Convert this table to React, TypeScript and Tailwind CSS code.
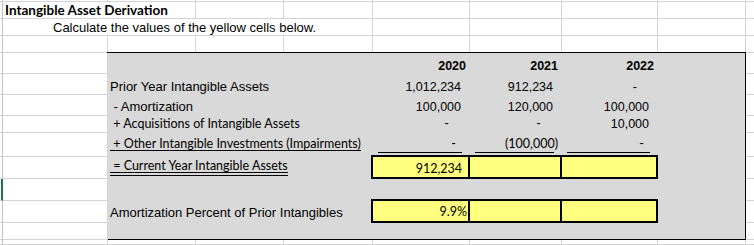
import React from "react";

const line = "border-b border-r border-[#d4d4d4]";
const arial = "font-['Liberation_Sans',Arial,sans-serif]";
const calibri = "font-['Lato',sans-serif]";

function Blank() {
  return <div className={line} />;
}

function Edge({ active = false }: { active?: boolean }) {
  return active ? (
    <div className="border-b border-r-2 border-b-[#d4d4d4] border-r-[#217346]" />
  ) : (
    <div className="border-b border-r border-b-[#d4d4d4] border-r-[#c2c2c2]" />
  );
}

function Tail() {
  return <div className="border-b border-[#d4d4d4]" />;
}

function Blanks({ n }: { n: number }) {
  return (
    <>
      {Array.from({ length: n }, (_, i) => (
        <Blank key={i} />
      ))}
    </>
  );
}

// one value cell inside the grey block, bottom aligned like Excel
function Val({ children, pr, pb, bold = false, font = arial, size = "text-[12.5px]" }: {
  children?: React.ReactNode;
  pr: string;
  pb: string;
  bold?: boolean;
  font?: string;
  size?: string;
}) {
  return (
    <div className={`flex items-end justify-end leading-none whitespace-nowrap text-black ${font} ${size} ${pr} ${pb} ${bold ? "font-bold" : ""}`}>
      {children}
    </div>
  );
}

function Underlined({ children, pr }: { children: React.ReactNode; pr: string }) {
  return (
    <div className={`flex flex-col justify-end pb-[4px] leading-none whitespace-nowrap text-[12.5px] text-black ${calibri}`}>
      <div className={`text-right ${pr}`}>{children}</div>
      <div className="mt-[2px] ml-[5px] mr-[8px] h-px bg-black" />
    </div>
  );
}

function Yellow({ children, pr = "pr-[6px]", pb }: { children?: React.ReactNode; pr?: string; pb: string }) {
  return (
    <div className={`-ml-[2px] -mt-[2px] flex items-end justify-end border-2 border-black bg-[#ffff80] leading-none text-[12.5px] text-black ${calibri} ${pr} ${pb}`}>
      {children}
    </div>
  );
}

function Block() {
  return (
    <div className="col-start-3 col-span-7 row-start-5 row-span-9 -ml-px -mt-px grid grid-cols-[265px_97px_92px_96px_1fr] grid-rows-[21px_21px_21px_17px_24px_22px_22px_22px_1fr] border border-black bg-[#d9d9d9]">
      {/* header */}
      <div />
      <Val pr="pr-[4px]" pb="pb-[2px]" bold>2020</Val>
      <Val pr="pr-[4px]" pb="pb-[2px]" bold>2021</Val>
      <Val pr="pr-[4px]" pb="pb-[2px]" bold>2022</Val>
      <div />

      {/* prior year */}
      <div className={`flex items-end pl-[2px] pb-[2px] leading-none text-[13px] text-black ${arial}`}>Prior Year Intangible Assets</div>
      <Val pr="pr-[9px]" pb="pb-[2px]">1,012,234</Val>
      <Val pr="pr-[9px]" pb="pb-[2px]">912,234</Val>
      <Val pr="pr-[21px]" pb="pb-[2px]">-</Val>
      <div />

      {/* amortization */}
      <div className={`flex items-end pl-[2px] pb-[3px] leading-none whitespace-pre text-[13px] text-black ${arial}`}> - Amortization</div>
      <Val pr="pr-[9px]" pb="pb-[3px]">100,000</Val>
      <Val pr="pr-[9px]" pb="pb-[3px]">120,000</Val>
      <Val pr="pr-[9px]" pb="pb-[3px]">100,000</Val>
      <div />

      {/* acquisitions */}
      <div className={`flex items-end pl-[2px] pb-[3px] leading-none whitespace-pre text-[12.5px] text-black ${calibri}`}> + Acquisitions of Intangible Assets</div>
      <Val pr="pr-[21px]" pb="pb-[3px]" font={calibri}>-</Val>
      <Val pr="pr-[21px]" pb="pb-[3px]" font={calibri}>-</Val>
      <Val pr="pr-[9px]" pb="pb-[3px]">10,000</Val>
      <div />

      {/* other investments */}
      <div className={`flex items-end pl-[2px] pb-[6px] leading-none text-[12.5px] text-black ${calibri}`}>
        <span className="inline-block whitespace-pre border-b border-black"> + Other Intangible Investments (Impairments)</span>
      </div>
      <Underlined pr="pr-[14px]">-</Underlined>
      <Underlined pr="pr-[4px]">(100,000)</Underlined>
      <Underlined pr="pr-[14px]">-</Underlined>
      <div />

      {/* current year */}
      <div className={`flex items-end pl-[2px] pb-[3px] leading-none text-[12.5px] text-black ${calibri}`}>
        <span className="inline-block border-b border-black pb-[2px]">
          <span className="inline-block whitespace-pre border-b border-black"> = Current Year Intangible Assets</span>
        </span>
      </div>
      <Yellow pb="pb-[2px]">912,234</Yellow>
      <Yellow pb="pb-[2px]" />
      <Yellow pb="pb-[2px]" />
      <div />

      <div />
      <div />
      <div />
      <div />
      <div />

      {/* percent */}
      <div className={`flex items-end pl-[2px] pb-[4px] leading-none text-[13px] text-black ${arial}`}>Amortization Percent of Prior Intangibles</div>
      <Yellow pr="pr-[1px]" pb="pb-[3px]">9.9%</Yellow>
      <Yellow pb="pb-[3px]" />
      <Yellow pb="pb-[3px]" />
      <div />
    </div>
  );
}

export default function App() {
  return (
    <div className="grid h-[245px] w-[754px] overflow-hidden bg-white grid-cols-[3px_105px_88px_88px_89px_97px_92px_96px_88px_1fr] grid-rows-[2px_17px_17px_17px_21px_21px_21px_17px_24px_22px_22px_22px_17px_1fr]">
      {/* row 0 */}
      <Edge />
      <Blanks n={8} />
      <Tail />

      {/* title */}
      <Edge />
      <div className={`col-span-2 flex items-end pl-[2px] pb-[1px] leading-none whitespace-nowrap text-[13.5px] font-bold text-black ${calibri} ${line}`}>
        Intangible Asset Derivation
      </div>
      <Blanks n={6} />
      <Tail />

      {/* instructions */}
      <Edge />
      <div className={`col-span-4 flex items-end pl-[50px] pb-[1px] leading-none whitespace-nowrap text-[13px] text-black ${arial} ${line}`}>
        Calculate the values of the yellow cells below.
      </div>
      <Blanks n={4} />
      <Tail />

      {/* spacer row */}
      <Edge />
      <Blanks n={8} />
      <Tail />

      <Block />

      {[4, 5, 6, 7, 8, 9, 10, 11, 12].map(r => (
        <React.Fragment key={r}>
          <Edge active={r === 10} />
          <Blank />
          <Tail />
        </React.Fragment>
      ))}

      {/* bottom row */}
      <Edge />
      <Blanks n={8} />
      <Tail />
    </div>
  );
}
